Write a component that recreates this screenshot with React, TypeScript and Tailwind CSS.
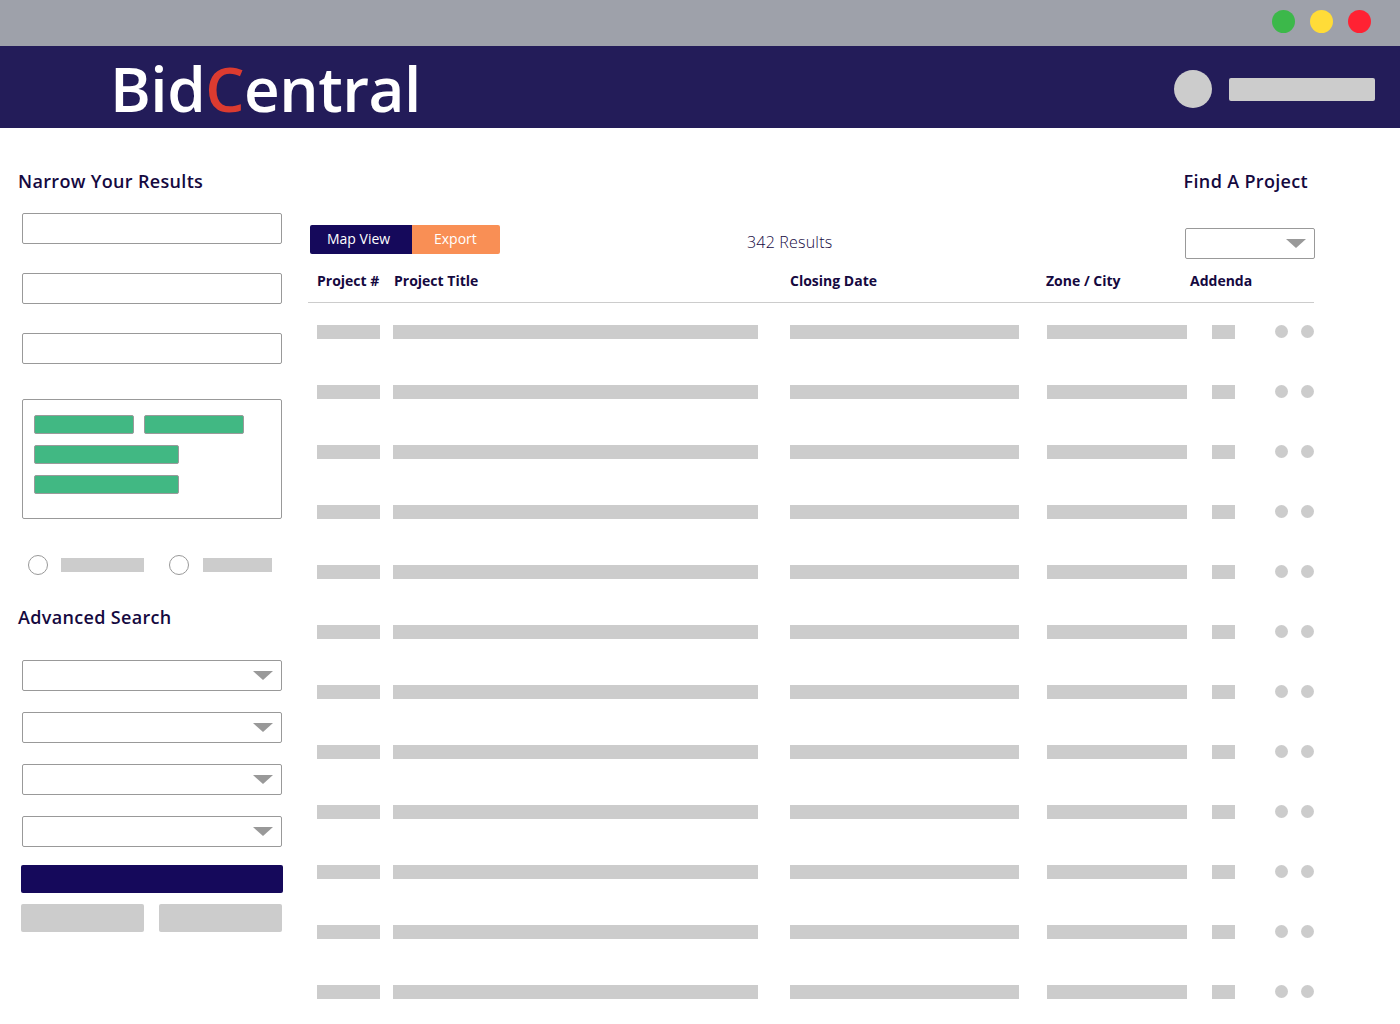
const rows = Array.from({ length: 12 }, (_, i) => i);

function Caret() {
  return (
    <svg width="20" height="9" viewBox="0 0 20 9" className="block">
      <path d="M0 0H20L10 9Z" fill="#999999" />
    </svg>
  );
}

function TextBox() {
  return <div className="h-[31px] w-[260px] rounded-[2px] border border-[#999999] bg-white" />;
}

function SelectBox({ className = "" }: { className?: string }) {
  return (
    <div className={`flex h-[31px] items-center justify-end rounded-[2px] border border-[#999999] bg-white pr-[8px] ${className}`}>
      <Caret />
    </div>
  );
}

function Chip({ className = "" }: { className?: string }) {
  return <div className={`h-[19px] rounded-[2px] border border-[#9a9a9a] bg-[#41b883] ${className}`} />;
}

function Heading({ children }: { children: string }) {
  return <h2 className="h-[24px] text-[18px] leading-[24px] font-semibold tracking-[0.33px] text-[#15093f]">{children}</h2>;
}

function Sidebar() {
  return (
    <aside className="w-[310px] shrink-0 pl-[18px] pt-[41px]">
      <Heading>Narrow Your Results</Heading>
      <div className="ml-[4px] mt-[20px] flex flex-col gap-[29px]">
        <TextBox />
        <TextBox />
        <TextBox />
      </div>
      <div className="ml-[4px] mt-[35px] h-[120px] w-[260px] rounded-[2px] border border-[#999999] px-[11px] pt-[15px]">
        <div className="flex gap-[10px]">
          <Chip className="w-[100px]" />
          <Chip className="w-[100px]" />
        </div>
        <Chip className="mt-[11px] w-[145px]" />
        <Chip className="mt-[11px] w-[145px]" />
      </div>
      <div className="ml-[10px] mt-[36px] mb-[30px] flex items-center">
        <div className="h-[20px] w-[20px] rounded-full border border-[#999999]" />
        <div className="ml-[13px] h-[14px] w-[83px] bg-[#cccccc]" />
        <div className="ml-[25px] h-[20px] w-[20px] rounded-full border border-[#999999]" />
        <div className="ml-[14px] h-[14px] w-[69px] bg-[#cccccc]" />
      </div>
      <Heading>Advanced Search</Heading>
      <div className="ml-[4px] mt-[31px] flex w-[260px] flex-col gap-[21px]">
        <SelectBox />
        <SelectBox />
        <SelectBox />
        <SelectBox />
      </div>
      <div className="ml-[3px] mt-[18px] h-[28px] w-[262px] rounded-[2px] bg-[#15095b]" />
      <div className="ml-[3px] mt-[11px] flex w-[261px] justify-between">
        <div className="h-[28px] w-[123px] rounded-[2px] bg-[#cccccc]" />
        <div className="h-[28px] w-[123px] rounded-[2px] bg-[#cccccc]" />
      </div>
    </aside>
  );
}

function ResultRow() {
  return (
    <div className="mt-[46px] flex h-[14px] items-start first:mt-[22px]">
      <div className="ml-[9px] h-[14px] w-[63px] bg-[#cccccc]" />
      <div className="ml-[13px] h-[14px] w-[365px] bg-[#cccccc]" />
      <div className="ml-[32px] h-[14px] w-[229px] bg-[#cccccc]" />
      <div className="ml-[28px] h-[14px] w-[140px] bg-[#cccccc]" />
      <div className="ml-[25px] h-[14px] w-[23px] bg-[#cccccc]" />
      <div className="ml-[40px] h-[13px] w-[13px] rounded-full bg-[#cccccc]" />
      <div className="ml-[13px] h-[13px] w-[13px] rounded-full bg-[#cccccc]" />
    </div>
  );
}

function TableHead() {
  return (
    <div className="-ml-[2px] mt-[11px] flex h-[33px] w-[1006px] border-b border-[#cccccc] pb-[10px] pl-[9px] text-[14px] leading-[22px] font-bold text-[#15093f]">
      <div className="w-[77px]">Project #</div>
      <div className="w-[396px]">Project Title</div>
      <div className="w-[256px]">Closing Date</div>
      <div className="w-[144px]">Zone / City</div>
      <div>Addenda</div>
    </div>
  );
}

export default function App() {
  return (
    <div className="h-[1024px] w-[1400px] overflow-hidden bg-white font-['Open_Sans',sans-serif]">
      <div className="flex h-[46px] items-start justify-end gap-[15px] bg-[#9ea1aa] pr-[29px] pt-[10px]">
        <div className="h-[23px] w-[23px] rounded-full bg-[#3cb84a]" />
        <div className="h-[23px] w-[23px] rounded-full bg-[#ffdc38]" />
        <div className="h-[23px] w-[23px] rounded-full bg-[#ff2233]" />
      </div>
      <header className="flex h-[82px] items-center bg-[#231c59] pl-[110px] pr-[25px] pt-[4px]">
        <div className="-mt-[2px] text-[62px] leading-[82px] font-semibold tracking-[-0.5px] text-white">
          Bid<span className="text-[#dc3b30]">C</span>entral
        </div>
        <div className="ml-auto h-[38px] w-[38px] rounded-full bg-[#cccccc]" />
        <div className="ml-[17px] h-[23px] w-[146px] rounded-[2px] bg-[#cccccc]" />
      </header>
      <div className="flex">
        <Sidebar />
        <main className="w-[1005px] pt-[41px]">
          <div className="ml-[873.6px] whitespace-nowrap">
            <Heading>Find A Project</Heading>
          </div>
          <div className="mt-[32px] flex h-[34px] items-start">
            <div className="flex h-[29px] text-[14px] leading-[27px] text-white">
              <div className="w-[102px] rounded-l-[2px] bg-[#15095b] pl-[17px]">Map View</div>
              <div className="w-[88px] rounded-r-[2px] bg-[#f98f55] pl-[22px]">Export</div>
            </div>
            <div className="ml-[247px] mt-[6px] text-[16px] leading-[22px] font-light tracking-[0.2px] text-[#15093f]">342 Results</div>
            <SelectBox className="ml-auto mt-[3px] w-[130px]" />
          </div>
          <TableHead />
          <div className="-ml-[2px]">
            {rows.map((r) => (
              <ResultRow key={r} />
            ))}
          </div>
        </main>
      </div>
    </div>
  );
}
